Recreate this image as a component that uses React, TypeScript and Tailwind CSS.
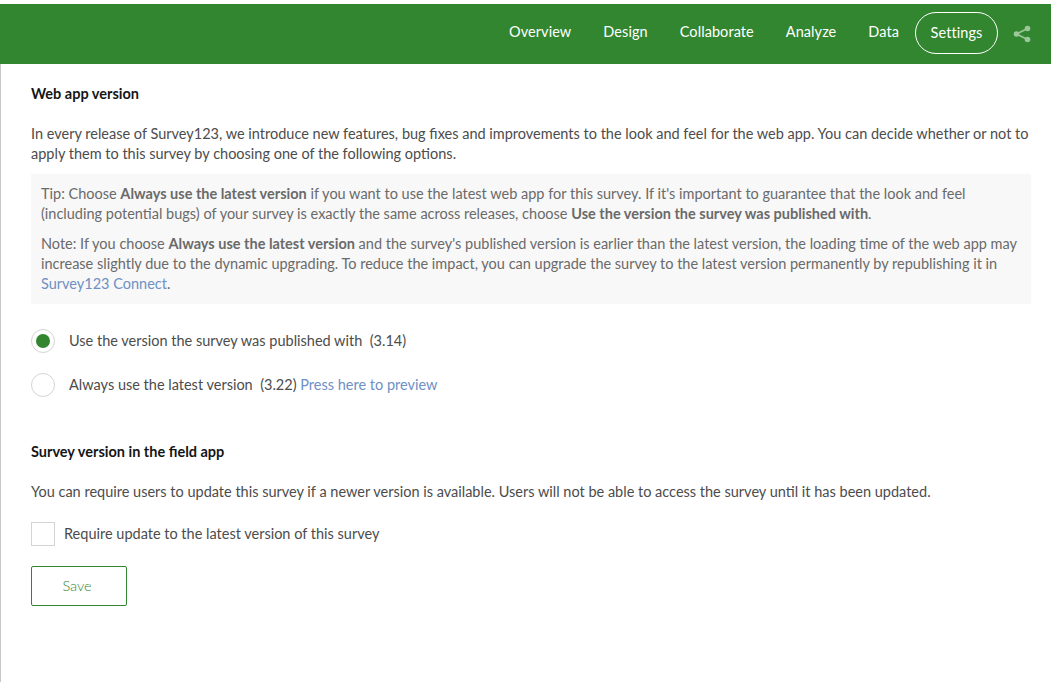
const navItems = ['Overview', 'Design', 'Collaborate', 'Analyze']

function Radio({ checked = false }: { checked?: boolean }) {
    return (
        <span className="flex h-6 w-6 shrink-0 items-center justify-center rounded-full border border-[#d4d4d4] bg-white">
            {checked && <span className="h-3.5 w-3.5 rounded-full bg-[#31862f]" />}
        </span>
    )
}

function ShareIcon() {
    return (
        <svg viewBox="0 0 18 18" className="ml-[15px] h-[18px] w-[18px] text-[#9cc79a]" fill="currentColor">
            <circle cx="14.5" cy="3.5" r="2.8" />
            <circle cx="3.5" cy="9" r="2.8" />
            <circle cx="14.5" cy="14.5" r="2.8" />
            <path d="M3.5 9 14.5 3.5M3.5 9l11 5.5" stroke="currentColor" strokeWidth="1.6" fill="none" />
        </svg>
    )
}

export default function App() {
    return (
        <div className="min-h-[682px] bg-white pt-1 font-['Lato',sans-serif] text-[14.5px] text-[#4c4c4c]">
            <header className="flex h-[60px] items-center justify-end bg-[#31862f] pr-5 text-white">
                <nav className="flex items-center tracking-[0.005em]">
                    {navItems.map((item) => (
                        <a key={item} className="mr-8 -mt-1">{item}</a>
                    ))}
                    <a className="mr-4 -mt-1">Data</a>
                    <a className="-mt-0.5 flex h-[42px] w-[83px] items-center justify-center rounded-[21px] border border-white pb-px">Settings</a>
                </nav>
                <ShareIcon />
            </header>

            <main className="h-[618px] border-l border-[#c8c8c8] pl-[30px] pr-5">
                <h2 className="pt-5 font-bold leading-5 text-[#151515]">Web app version</h2>
                <p className="mt-5 leading-5">
                    In every release of Survey123, we introduce new features, bug fixes and improvements to the look and feel for the web app. You can decide whether or not to apply them to this survey by choosing one of the following options.
                </p>
                <div className="mt-2.5 bg-[#f8f8f8] px-2.5 pb-2.5 pt-2.5 text-[#6a6a6a]">
                    <p className="leading-5">
                        Tip: Choose <b>Always use the latest version</b> if you want to use the latest web app for this survey. If it's important to guarantee that the look and feel (including potential bugs) of your survey is exactly the same across releases, choose <b>Use the version the survey was published with</b>.
                    </p>
                    <p className="mt-2.5 leading-5">
                        Note: If you choose <b>Always use the latest version</b> and the survey's published version is earlier than the latest version, the loading time of the web app may increase slightly due to the dynamic upgrading. To reduce the impact, you can upgrade the survey to the latest version permanently by republishing it in <a className="text-[#6e90c4]">Survey123 Connect</a>.
                    </p>
                </div>

                <div className="mt-[25px] flex flex-col gap-5">
                    <label className="flex items-center gap-[14px]">
                        <Radio checked />
                        <span>Use the version the survey was published with&nbsp; (3.14)</span>
                    </label>
                    <label className="flex items-center gap-[14px]">
                        <Radio />
                        <span>Always use the latest version&nbsp; (3.22)&nbsp;<a className="text-[#6e90c4]">Press here to preview</a></span>
                    </label>
                </div>

                <h2 className="mt-[45px] font-bold leading-5 text-[#151515]">Survey version in the field app</h2>
                <p className="mt-5 leading-5">
                    You can require users to update this survey if a newer version is available. Users will not be able to access the survey until it has been updated.
                </p>
                <label className="mt-5 flex items-center gap-[9px]">
                    <span className="h-6 w-6 shrink-0 border border-[#d4d4d4]" />
                    <span>Require update to the latest version of this survey</span>
                </label>
                <button className="mt-5 h-10 w-24 rounded-[2px] border border-[#31862f] pr-1 font-light text-[#31862f]">Save</button>
            </main>
        </div>
    )
}
